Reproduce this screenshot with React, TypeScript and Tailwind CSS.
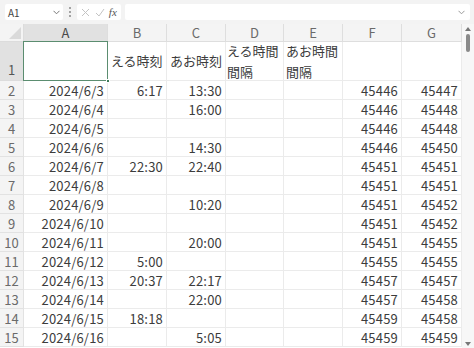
import React from 'react';

type Row = { n: number; a: string; b?: string; c?: string; f: string; g: string };

const rows: Row[] = [
  { n: 2, a: '2024/6/3', b: '6:17', c: '13:30', f: '45446', g: '45447' },
  { n: 3, a: '2024/6/4', c: '16:00', f: '45446', g: '45448' },
  { n: 4, a: '2024/6/5', f: '45446', g: '45448' },
  { n: 5, a: '2024/6/6', c: '14:30', f: '45446', g: '45450' },
  { n: 6, a: '2024/6/7', b: '22:30', c: '22:40', f: '45451', g: '45451' },
  { n: 7, a: '2024/6/8', f: '45451', g: '45451' },
  { n: 8, a: '2024/6/9', c: '10:20', f: '45451', g: '45452' },
  { n: 9, a: '2024/6/10', f: '45451', g: '45452' },
  { n: 10, a: '2024/6/11', c: '20:00', f: '45451', g: '45455' },
  { n: 11, a: '2024/6/12', b: '5:00', f: '45455', g: '45455' },
  { n: 12, a: '2024/6/13', b: '20:37', c: '22:17', f: '45457', g: '45457' },
  { n: 13, a: '2024/6/14', c: '22:00', f: '45457', g: '45458' },
  { n: 14, a: '2024/6/15', b: '18:18', f: '45459', g: '45458' },
  { n: 15, a: '2024/6/16', c: '5:05', f: '45459', g: '45459' },
];

const cols = [
  { key: 'A', w: 'w-[84px]' },
  { key: 'B', w: 'w-[59px]' },
  { key: 'C', w: 'w-[59px]' },
  { key: 'D', w: 'w-[58px]' },
  { key: 'E', w: 'w-[59px]' },
  { key: 'F', w: 'w-[59px]' },
  { key: 'G', w: 'w-[60px]' },
];

const font = { fontFamily: '"Noto Sans CJK JP", "Noto Sans", sans-serif' };

const Cell: React.FC<{ w: string; children?: React.ReactNode }> = ({ w, children }) => (
  <div className={`${w} shrink-0 h-full border-r border-b border-[#ebebeb] flex items-center justify-end pr-[3px] text-[13px] text-[#3c3c3c] tracking-[0.2px] leading-none`}>
    {children}
  </div>
);

export default function App() {
  return (
    <div className="w-[474px] h-[348px] overflow-hidden bg-white flex flex-col" style={font}>
      {/* formula bar */}
      <div className="h-[24px] shrink-0 bg-[#f3f3f3] flex items-center pl-[5px] pr-[4px] gap-[4px]">
        <div className="w-[58px] h-[16px] bg-white rounded-[2px] flex items-center justify-between px-[3px]">
          <span className="text-[10px] text-[#444]">A1</span>
          <svg width="7" height="5" viewBox="0 0 7 5"><path d="M0.5 0.8 L3.5 3.8 L6.5 0.8" fill="none" stroke="#777" strokeWidth="1" /></svg>
        </div>
        <div className="flex flex-col gap-[2px] px-[2px]">
          <span className="w-[2px] h-[2px] bg-[#888] rounded-full" />
          <span className="w-[2px] h-[2px] bg-[#888] rounded-full" />
          <span className="w-[2px] h-[2px] bg-[#888] rounded-full" />
        </div>
        <div className="w-[44px] h-[16px] bg-white rounded-[2px] flex items-center justify-around px-[2px]">
          <svg width="9" height="9" viewBox="0 0 9 9"><path d="M1 1 L8 8 M8 1 L1 8" stroke="#c4c4c4" strokeWidth="1" /></svg>
          <svg width="10" height="9" viewBox="0 0 10 9"><path d="M1 5 L4 8 L9 1" fill="none" stroke="#c4c4c4" strokeWidth="1" /></svg>
          <span className="text-[11px] italic text-[#555]" style={{ fontFamily: '"Liberation Serif", serif' }}>fx</span>
        </div>
        <div className="flex-1 h-[16px] bg-white rounded-[2px] flex items-center justify-end pr-[5px]">
          <svg width="7" height="5" viewBox="0 0 7 5"><path d="M0.5 0.8 L3.5 3.8 L6.5 0.8" fill="none" stroke="#999" strokeWidth="1" /></svg>
        </div>
      </div>

      <div className="flex flex-1 min-h-0">
        <div className="w-[462px] shrink-0 flex flex-col">
          {/* column headers */}
          <div className="h-[18px] shrink-0 flex bg-[#f4f4f4]">
            <div className="w-[24px] shrink-0 h-full border-r border-b border-[#dcdcdc] relative">
              <svg className="absolute right-[2px] bottom-[2px]" width="12" height="12" viewBox="0 0 12 12"><path d="M12 0 L12 12 L0 12 Z" fill="#dadada" /></svg>
            </div>
            {cols.map((c) => (
              <div
                key={c.key}
                className={`${c.w} shrink-0 h-full border-r border-b border-[#dedede] flex items-center justify-center text-[13px] leading-none ${c.key === 'A' ? 'bg-[#e1e1e1] text-[#4a4a4a]' : 'text-[#6a6a6a]'}`}
              >
                {c.key}
              </div>
            ))}
          </div>

          {/* row 1 */}
          <div className="h-[39px] shrink-0 flex">
            <div className="w-[24px] shrink-0 h-full bg-[#e1e1e1] border-r border-b border-[#dcdcdc] flex items-end justify-center pb-[4px] text-[13px] text-[#555] leading-none">1</div>
            <div className="w-[84px] shrink-0 h-full relative border-r border-b border-[#ebebeb]">
              <div className="absolute -left-[1px] -top-[1px] right-[-1px] bottom-[-1px] border-[1.5px] border-[#5b8d70]" />
              <div className="absolute right-[-3px] bottom-[-3px] w-[4px] h-[4px] bg-[#3f7a58] border border-white" />
            </div>
            <div className="w-[59px] shrink-0 h-full border-r border-b border-[#ebebeb] flex items-center pl-[3px] text-[13px] text-[#3c3c3c] whitespace-nowrap">える時刻</div>
            <div className="w-[59px] shrink-0 h-full border-r border-b border-[#ebebeb] flex items-center pl-[3px] text-[13px] text-[#3c3c3c] whitespace-nowrap">あお時刻</div>
            <div className="w-[58px] shrink-0 h-full border-r border-b border-[#ebebeb] flex flex-col justify-center gap-[5px] pl-[1px] text-[13px] text-[#3c3c3c] leading-[16px] whitespace-nowrap">
              <span>える時間</span>
              <span>間隔</span>
            </div>
            <div className="w-[59px] shrink-0 h-full border-r border-b border-[#ebebeb] flex flex-col justify-center gap-[5px] pl-[2px] text-[13px] text-[#3c3c3c] leading-[16px] whitespace-nowrap">
              <span>あお時間</span>
              <span>間隔</span>
            </div>
            <div className="w-[59px] shrink-0 h-full border-r border-b border-[#ebebeb]" />
            <div className="w-[60px] shrink-0 h-full border-r border-b border-[#ebebeb]" />
          </div>

          {rows.map((r) => (
            <div key={r.n} className="h-[19px] shrink-0 flex">
              <div className="w-[24px] shrink-0 h-full bg-[#f4f4f4] border-r border-b border-[#e2e2e2] flex items-center justify-center text-[13px] text-[#6a6a6a] leading-none">
                {r.n}
              </div>
              <Cell w="w-[84px]">{r.a}</Cell>
              <Cell w="w-[59px]">{r.b}</Cell>
              <Cell w="w-[59px]">{r.c}</Cell>
              <Cell w="w-[58px]" />
              <Cell w="w-[59px]" />
              <Cell w="w-[59px]">{r.f}</Cell>
              <Cell w="w-[60px]">{r.g}</Cell>
            </div>
          ))}
        </div>

        {/* vertical scrollbar */}
        <div className="flex-1 bg-[#f7f7f7] flex flex-col items-center pt-[3px]">
          <svg width="6" height="4" viewBox="0 0 6 4"><path d="M0 4 L3 0 L6 4 Z" fill="#777" /></svg>
          <div className="w-[4px] h-[18px] mt-[3px] rounded-full bg-[#8a8a8a]" />
          <div className="flex-1" />
          <svg className="mb-[2px]" width="6" height="4" viewBox="0 0 6 4"><path d="M0 0 L3 4 L6 0 Z" fill="#777" /></svg>
        </div>
      </div>
    </div>
  );
}
